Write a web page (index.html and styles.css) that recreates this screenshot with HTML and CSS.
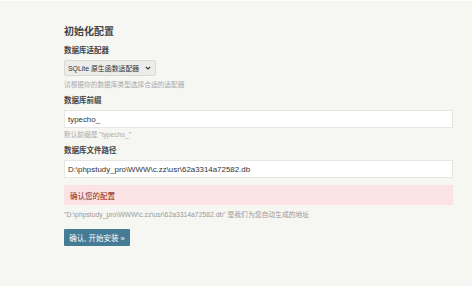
FILE: index.html
```html
<!DOCTYPE html>
<html lang="zh-CN">
<head>
<meta charset="utf-8">
<title>初始化配置</title>
<link rel="stylesheet" href="styles.css">
</head>
<body>
<div class="panel">
  <h2 class="title">初始化配置</h2>
  <div class="field">
    <div class="label">数据库适配器</div>
    <div class="select"><span>SQLite 原生函数适配器</span><svg class="chev" width="6" height="4" viewBox="0 0 6 4"><path d="M0.8 0.8 L3 3 L5.2 0.8" fill="none" stroke="#333" stroke-width="1.1"/></svg></div>
    <div class="hint">请根据你的数据库类型选择合适的适配器</div>
  </div>
  <div class="field">
    <div class="label">数据库前缀</div>
    <div class="input">typecho_</div>
    <div class="hint hint-tight">默认前缀是 "typecho_"</div>
  </div>
  <div class="field">
    <div class="label">数据库文件路径</div>
    <div class="input">D:\phpstudy_pro\WWW\c.zz\usr\62a3314a72582.db</div>
  </div>
  <div class="alert">确认您的配置</div>
  <div class="desc">"D:\phpstudy_pro\WWW\c.zz\usr\62a3314a72582.db" 是我们为您自动生成的地址</div>
  <div class="btn">确认, 开始安装 »</div>
</div>
</body>
</html>
```
FILE: styles.css
```css
html, body {
  margin: 0;
  padding: 0;
  background: #ffffff;
}
body {
  font-family: "Liberation Sans", "Noto Sans CJK SC", sans-serif;
  color: #444;
}
.panel {
  box-sizing: border-box;
  background: #F6F6F3;
  margin: 1px 2px 0 0;
  height: 285px;
  padding: 24px 19px 0 64px;
  display: flex;
  flex-direction: column;
}
.title {
  margin: 0;
  font-size: 10px;
  line-height: 14px;
  font-weight: bold;
  color: #444;
}
.field {
  display: flex;
  flex-direction: column;
  align-items: flex-start;
}
.label {
  margin-top: 7px;
  font-size: 7.5px;
  line-height: 10px;
  font-weight: bold;
  color: #444;
}
.select {
  margin-top: 4px;
  box-sizing: border-box;
  height: 16px;
  width: 92px;
  display: flex;
  align-items: center;
  justify-content: space-between;
  padding: 0 4px 0 3px;
  background: #ECECEA;
  border: 1px solid #D9D9D6;
  border-radius: 2px;
  font-size: 6.9px;
  color: #333;
  white-space: nowrap;
}
.hint {
  margin-top: 4px;
  font-size: 6.7px;
  line-height: 9px;
  color: #AAA;
  white-space: nowrap;
}
.hint-tight {
  margin-top: 2px;
}
.input {
  margin-top: 4px;
  box-sizing: border-box;
  align-self: stretch;
  height: 18px;
  display: flex;
  align-items: center;
  padding: 0 3px;
  background: #fff;
  border: 1px solid #E6E6E3;
  font-size: 7.9px;
  color: #333;
  white-space: nowrap;
}
.alert {
  margin-top: 7px;
  box-sizing: border-box;
  height: 20px;
  display: flex;
  align-items: center;
  padding: 0 6px;
  background: #FBE3E4;
  color: #8A1F11;
  font-size: 7.5px;
}
.desc {
  margin-top: 5px;
  font-size: 6.8px;
  line-height: 9px;
  color: #999;
  white-space: nowrap;
}
.btn {
  margin-top: 10px;
  align-self: flex-start;
  box-sizing: border-box;
  height: 17px;
  width: 66px;
  display: flex;
  align-items: center;
  justify-content: center;
  background: #467B96;
  color: #fff;
  font-size: 7.5px;
  border-radius: 1px;
  white-space: nowrap;
}
```
